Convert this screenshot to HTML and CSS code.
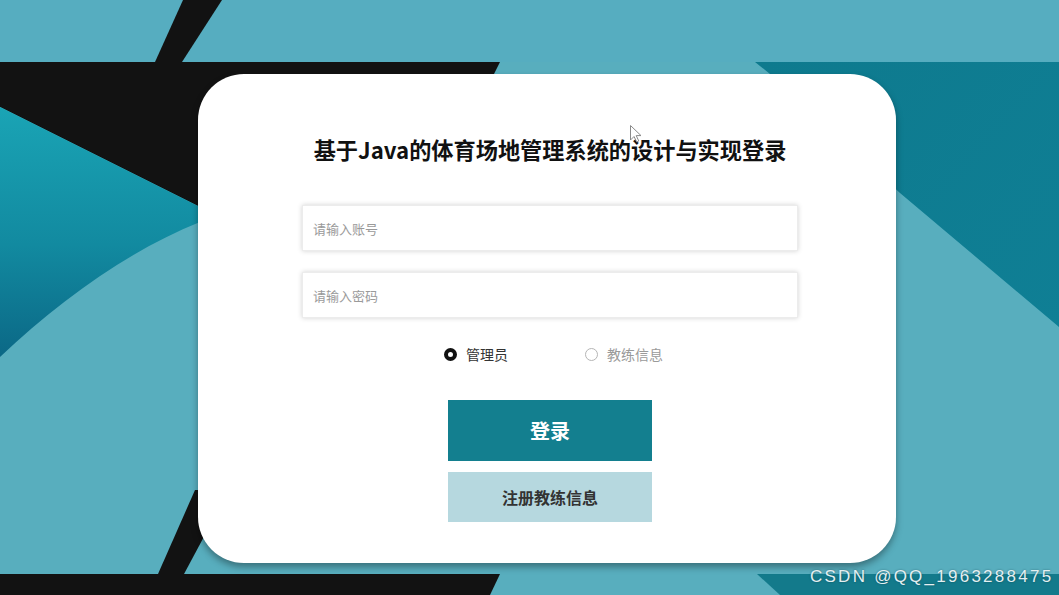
FILE: index.html
```html
<!DOCTYPE html>
<html lang="zh-CN">
<head>
<meta charset="utf-8">
<title>登录</title>
<link rel="stylesheet" href="styles.css">
</head>
<body>
<div class="screen">
  <svg class="bg" viewBox="0 0 1059 595" width="1059" height="595" aria-hidden="true">
    <defs>
      <linearGradient id="tealGrad" x1="0" y1="107" x2="0" y2="357" gradientUnits="userSpaceOnUse">
        <stop offset="0" stop-color="#1aa4b5"/>
        <stop offset="0.55" stop-color="#128aa0"/>
        <stop offset="1" stop-color="#0b6886"/>
      </linearGradient>
      <linearGradient id="darkGrad" x1="760" y1="62" x2="1059" y2="330" gradientUnits="userSpaceOnUse">
        <stop offset="0" stop-color="#0e7a8e"/>
        <stop offset="1" stop-color="#0f7f95"/>
      </linearGradient>
    </defs>
    <rect x="0" y="0" width="1059" height="595" fill="#58aebe"/>
    <rect x="0" y="0" width="1059" height="62" fill="#56adc0"/>
    <polygon points="183,0 222,0 182,62 155,62" fill="#121212"/>
    <path d="M0,62 L500,62 L486,90 L200,207 L0,107 Z" fill="#121212"/>
    <path d="M0,107 L200,207 L200,222 C130,250 60,300 0,357 Z" fill="url(#tealGrad)"/>
    <path d="M755,62 L1059,62 L1059,327 L900,193 L770,74 Z" fill="url(#darkGrad)"/>
    <polygon points="195,490 229,490 184,574 158,574" fill="#121212"/>
    <polygon points="0,574 500,574 490,595 0,595" fill="#121212"/>
    <polygon points="757,574 1059,574 1059,595 780,595" fill="#137a8b"/>
  </svg>

  <main class="card">
    <h1 class="title">基于Java的体育场地管理系统的设计与实现登录</h1>
    <input class="field" type="text" placeholder="请输入账号">
    <input class="field field-gap" type="password" placeholder="请输入密码">
    <div class="roles">
      <label class="role"><input class="radio" type="radio" name="role" checked><span>管理员</span></label>
      <label class="role role-off"><input class="radio" type="radio" name="role"><span>教练信息</span></label>
    </div>
    <button class="btn btn-login" type="button">登录</button>
    <button class="btn btn-register" type="button">注册教练信息</button>
  </main>

  <svg class="cursor" viewBox="0 0 12 18" width="12" height="18" aria-hidden="true">
    <path d="M0.5,0.5 L0.5,15 L4,11.5 L6.8,17 L8.8,16 L6.2,10.6 L11,10.6 Z" fill="#ffffff" stroke="#8a8a8a" stroke-width="1"/>
  </svg>

  <div class="watermark">CSDN @QQ_1963288475</div>
</div>
</body>
</html>
```

FILE: styles.css
```css
* {
  box-sizing: border-box;
}

html, body {
  margin: 0;
  padding: 0;
}

body {
  font-family: "Noto Sans CJK SC", "Noto Sans", sans-serif;
  background: #58aebe;
}

.screen {
  position: relative;
  width: 1059px;
  height: 595px;
  overflow: hidden;
  padding: 74px 0 0 198px;
}

.bg {
  position: absolute;
  left: 0;
  top: 0;
  display: block;
}

.card {
  position: relative;
  width: 698px;
  height: 489px;
  background: #ffffff;
  border-radius: 46px;
  box-shadow: 0 4px 7px rgba(0, 0, 0, 0.35);
  padding: 60px 98px 0 104px;
  display: flex;
  flex-direction: column;
  align-items: center;
}

.title {
  margin: 0;
  font-size: 22.2px;
  line-height: 30px;
  font-weight: 700;
  color: #111111;
  white-space: nowrap;
}

.field {
  display: block;
  width: 496px;
  height: 46px;
  margin: 41px 0 0 0;
  padding: 0 10px;
  border: 1px solid #ececec;
  outline: none;
  background: #ffffff;
  box-shadow: 0 0 5px rgba(0, 0, 0, 0.18);
  font-family: "Noto Sans CJK SC", sans-serif;
  font-size: 13px;
  color: #333333;
}

.field-gap {
  margin-top: 21px;
}

.field::placeholder {
  color: #9a9a9a;
}

.roles {
  display: flex;
  justify-content: center;
  gap: 77px;
  margin-top: 26px;
  height: 20px;
  padding-left: 7px;
}

.role {
  display: flex;
  align-items: center;
  gap: 9px;
  font-size: 14px;
  line-height: 20px;
  color: #333333;
}

.role-off {
  color: #9a9a9a;
}

.radio {
  appearance: none;
  -webkit-appearance: none;
  margin: 0;
  width: 13px;
  height: 13px;
  border-radius: 50%;
  border: 1px solid #b5b5b5;
  background: #ffffff;
}

.radio:checked {
  border: 4px solid #111111;
}

.btn {
  display: block;
  width: 204px;
  border: none;
  padding: 0;
  font-family: "Noto Sans CJK SC", sans-serif;
  font-weight: 700;
  cursor: pointer;
}

.btn-login {
  margin-top: 36px;
  height: 61px;
  background: #137f8f;
  color: #ffffff;
  font-size: 20px;
}

.btn-register {
  margin-top: 11px;
  height: 50px;
  background: #b6d8df;
  color: #333333;
  font-size: 16px;
}

.cursor {
  position: absolute;
  left: 630px;
  top: 125px;
}

.watermark {
  position: absolute;
  left: 810px;
  top: 566px;
  font-family: "Liberation Sans", Arial, sans-serif;
  font-size: 17px;
  line-height: 22px;
  letter-spacing: 2.25px;
  color: #e3f0f2;
  text-shadow: 0 0 2px rgba(0, 40, 50, 0.5);
  white-space: nowrap;
}
```
